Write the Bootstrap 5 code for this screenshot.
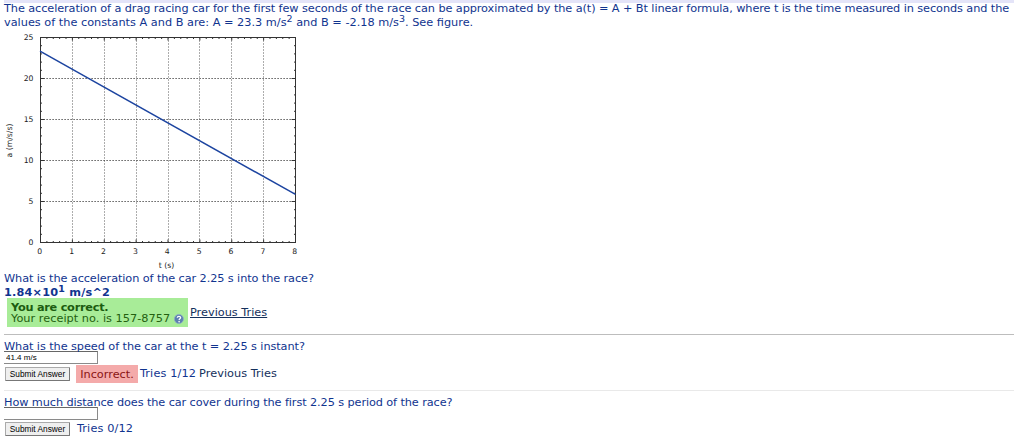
<!DOCTYPE html>
<html lang="en">
<head>
  <meta charset="UTF-8">
  <meta name="viewport" content="width=device-width, initial-scale=1.0">
  <title>Drag Racing Car</title>
  <link href="https://cdn.jsdelivr.net/npm/bootstrap@5.3.2/dist/css/bootstrap.min.css" rel="stylesheet">
  <style>
    body {
      font-family: Verdana, "DejaVu Sans", sans-serif;
      font-size: 11.3px;
      line-height: 14px;
      color: #10348f;
    }
    .problem {
      width: 1014px;
      padding: 1px 0 0 4px;
      background: linear-gradient(#e4e4f8, #e4e4f8) 4px 0 / 1010px 3px no-repeat;
      white-space: nowrap;
    }
    .textline { height: 14px; line-height: 16px; }
    .textline sup { font-size: 9.5px; line-height: 0; top: -4px; vertical-align: baseline; }
    .l1 { letter-spacing: -0.092px; }
    .l2 { letter-spacing: 0; }
    .q1 { letter-spacing: -0.1px; }
    .a1 { letter-spacing: 0.18px; }
    .q2 { letter-spacing: -0.08px; }
    .q3 { letter-spacing: -0.105px; }
    .plot { width: 306px; height: 242px; margin-left: -4px; }
    .plot text { font-family: "DejaVu Sans", sans-serif; font-size: 7.7px; fill: #222; }
    .correct {
      width: 181px;
      height: 29px;
      margin: -1px 2px 0 3px;
      padding: 4px 4px 0 4px;
      line-height: 11px;
      background: #a8ec98;
      color: #246010;
    }
    .correct strong { color: #1c5c10; letter-spacing: -0.25px; }
    .receipt { letter-spacing: 0.02px; }
    .incorrect {
      width: 62px;
      height: 18px;
      margin-left: 6px;
      line-height: 19px;
      background: #f4aaaa;
      color: #8a1414;
    }
    .tries { margin-left: 2px; line-height: 18px; letter-spacing: 0.12px; }
    .tries-first { margin-left: 7px; line-height: 16px; }
    .tries-link, .tries-link:hover { color: #14305c; }
    .tries-link.top-link { line-height: 16px; }
    .tries-link.history { margin-left: 3px; line-height: 18px; letter-spacing: 0.05px; }
    .rule { height: 1px; margin-top: 7px; background: #bdbdbd; }
    .rule-light { background: #e9e9e9; }
    .answer-box {
      display: block;
      width: 94px;
      height: 13px;
      margin: -2px 0 1px;
      padding: 0 2px;
      border: 1px solid #8a8a8a;
      border-top-color: #666;
      border-left: 0;
      border-radius: 0;
      font: 8px/11px "Liberation Sans", sans-serif;
      color: #000;
    }
    .submit-btn {
      width: 65px;
      height: 14px;
      margin-left: 1px;
      padding: 0;
      border: 1px solid #aaa;
      border-right-color: #777;
      border-bottom-color: #777;
      border-radius: 1px;
      background: #efefef;
      font: 8.3px/12px "Liberation Sans", sans-serif;
      color: #000;
    }
  </style>
</head>
<body>

  <main class="problem">
    <!-- Problem statement -->
    <div class="textline"><span class="l1">The acceleration of a drag racing car for the first few seconds of the race can be approximated by the a(t) = A + Bt linear formula, where t is the time measured in seconds and the</span></div>
    <div class="textline"><span class="l2">values of the constants A and B are: A = 23.3 m/s<sup>2</sup> and B = -2.18 m/s<sup>3</sup>. See figure.</span></div>

    <svg class="plot d-block" id="plot" viewBox="0 29 306 242"></svg>

    <!-- Part 1 -->
    <div class="textline"><span class="q1">What is the acceleration of the car 2.25 s into the race?</span></div>
    <div class="textline fw-bold"><span class="a1">1.84×10<sup>1</sup> m/s^2</span></div>
    <div class="d-flex align-items-center">
      <div class="correct">
        <strong class="d-block">You are correct.</strong>
        <div class="d-flex align-items-center">
          <span class="receipt">Your receipt no. is 157-8757</span>
          <svg class="ms-1" width="10" height="10" viewBox="0 0 10 10">
            <circle cx="5" cy="5" r="4.6" fill="#5c7fb0" stroke="#8fa9cc" stroke-width=".7"/>
            <path d="M3.3 3.7C3.4 1.7 6.8 1.8 6.7 3.7C6.6 4.8 5.2 4.7 5.2 6" fill="none" stroke="#fff" stroke-width="1.3"/>
            <circle cx="5.2" cy="7.7" r=".8" fill="#fff"/>
          </svg>
        </div>
      </div>
      <a class="tries-link top-link" href="#">Previous Tries</a>
    </div>
    <div class="rule"></div>

    <!-- Part 2 -->
    <div class="textline mt-1"><span class="q2">What is the speed of the car at the t = 2.25 s instant?</span></div>
    <input class="answer-box" type="text" value="41.4 m/s">
    <div class="d-flex align-items-center">
      <button class="submit-btn" type="button">Submit Answer</button>
      <span class="incorrect text-center">Incorrect.</span>
      <span class="tries">Tries 1/12</span>
      <a class="tries-link history text-decoration-none" href="#">Previous Tries</a>
    </div>
    <div class="rule rule-light"></div>

    <!-- Part 3 -->
    <div class="textline mt-1"><span class="q3">How much distance does the car cover during the first 2.25 s period of the race?</span></div>
    <input class="answer-box" type="text" value="">
    <div class="d-flex align-items-center">
      <button class="submit-btn" type="button">Submit Answer</button>
      <span class="tries tries-first">Tries 0/12</span>
    </div>
  </main>

  <script>
    const x0 = 40.5, x1 = 295.5, y0 = 242.5, y1 = 37.5;
    const px = t => x0 + t * (x1 - x0) / 8;
    const py = a => y0 - a * (y0 - y1) / 25;

    function drawPlot() {
      let out = "";
      const line = (ax, ay, bx, by, extra) => {
        out += `<line x1="${ax}" y1="${ay}" x2="${bx}" y2="${by}" stroke="#333" ${extra || ""}/>`;
      };
      // grid
      for (let t = 1; t < 8; t++) {
        const x = Math.floor(px(t)) + 0.5;
        line(x, y0, x, y1, 'stroke-dasharray="1 2" stroke-opacity=".8"');
      }
      for (let a = 5; a < 25; a += 5) {
        line(x0, py(a), x1, py(a), 'stroke-dasharray="1.2 1.8"');
      }
      // ticks
      for (let i = 0; i <= 40; i++) {
        const len = i % 5 ? 1.5 : 3;
        line(px(i / 5), y0, px(i / 5), y0 - len);
        line(px(i / 5), y1, px(i / 5), y1 + len);
      }
      for (let a = 0; a <= 25; a++) {
        const len = a % 5 ? 1.5 : 4;
        line(x0, py(a), x0 + len, py(a));
        line(x1, py(a), x1 - len, py(a));
      }
      out += `<rect x="${x0}" y="${y1}" width="${x1 - x0}" height="${y0 - y1}" fill="none" stroke="#333"/>`;
      out += `<line x1="${px(0) - 0.5}" y1="${py(23.35)}" x2="${px(8)}" y2="${py(5.86)}" stroke="#1c44a0" stroke-width="1.5"/>`;
      // labels
      for (let t = 0; t <= 8; t++) {
        out += `<text x="${px(t) - 0.7}" y="254" text-anchor="middle">${t}</text>`;
      }
      for (let a = 0; a <= 25; a += 5) {
        out += `<text x="33.5" y="${py(a) + 2.3}" text-anchor="end">${a}</text>`;
      }
      out += '<text x="166.5" y="267.5" text-anchor="middle">t (s)</text>';
      out += '<text transform="translate(12 140.5) rotate(-90)" text-anchor="middle">a (m/s/s)</text>';
      document.getElementById("plot").innerHTML = out;
    }

    drawPlot();
  </script>

  <script src="https://cdn.jsdelivr.net/npm/bootstrap@5.3.2/dist/js/bootstrap.bundle.min.js"></script>
</body>
</html>
